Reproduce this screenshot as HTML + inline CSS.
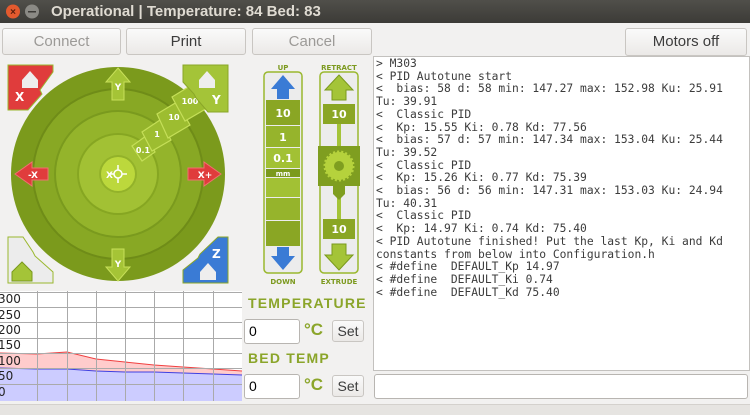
<!DOCTYPE html>
<html><head><meta charset="utf-8"><style>
*{margin:0;padding:0;box-sizing:border-box}
body{width:750px;height:415px;background:#f2f1f0;position:relative;overflow:hidden;font-family:"Liberation Sans","DejaVu Sans",sans-serif}
.t{position:absolute;left:0;top:0;width:750px;height:23px;background:linear-gradient(#504f4a,#3c3b37);color:#dfdbd2;font-weight:bold;font-size:15px;line-height:23px}
.btn{position:absolute;height:27px;border:1px solid #c9c6c2;border-radius:3px;background:linear-gradient(#fafafa,#ebe9e7);font-size:15px;text-align:center;line-height:25px;color:#3c3c3c}
.dis{color:#9c9a97}
.con{position:absolute;left:373px;top:56px;width:377px;height:315px;background:#fff;border:1px solid #c3c1be;font-family:"DejaVu Sans Mono",monospace;font-size:11.3px;line-height:12.7px;color:#3c3c3c;padding:1px 0 0 2px;white-space:pre}
.inp{position:absolute;background:#fff;border:1px solid #b8b5b1;border-radius:3px}
.lbl{position:absolute;color:#8ba52a;font-weight:bold;font-size:14px;letter-spacing:1.2px}
</style></head><body>
<div class="t"><svg width="50" height="23" style="position:absolute;left:0;top:0"><circle cx="13" cy="11.5" r="7" fill="#e45a2e"/><text x="13" y="15" font-size="10" text-anchor="middle" fill="#5a1e0c" font-weight="bold">×</text><circle cx="32" cy="11.5" r="7" fill="#8b8a85"/><rect x="28" y="11" width="8" height="1.5" fill="#3c3b37"/></svg><span style="position:absolute;left:51px">Operational | Temperature: 84 Bed: 83</span></div>
<div class="btn dis" style="left:2px;top:28px;width:119px">Connect</div>
<div class="btn" style="left:126px;top:28px;width:120px">Print</div>
<div class="btn dis" style="left:252px;top:28px;width:120px">Cancel</div>
<div class="btn" style="left:625px;top:28px;width:122px;height:28px">Motors off</div>
<div class="con">&gt; M303
&lt; PID Autotune start
&lt;  bias: 58 d: 58 min: 147.27 max: 152.98 Ku: 25.91
Tu: 39.91
&lt;  Classic PID
&lt;  Kp: 15.55 Ki: 0.78 Kd: 77.56
&lt;  bias: 57 d: 57 min: 147.34 max: 153.04 Ku: 25.44
Tu: 39.52
&lt;  Classic PID
&lt;  Kp: 15.26 Ki: 0.77 Kd: 75.39
&lt;  bias: 56 d: 56 min: 147.31 max: 153.03 Ku: 24.94
Tu: 40.31
&lt;  Classic PID
&lt;  Kp: 14.97 Ki: 0.74 Kd: 75.40
&lt; PID Autotune finished! Put the last Kp, Ki and Kd
constants from below into Configuration.h
&lt; #define  DEFAULT_Kp 14.97
&lt; #define  DEFAULT_Ki 0.74
&lt; #define  DEFAULT_Kd 75.40</div>
<div class="inp" style="left:374px;top:374px;width:374px;height:25px"></div>
<div style="position:absolute;left:0;top:404px;width:750px;height:11px;background:#e6e4e1;border-top:1px solid #d4d1cd"></div>

<svg width="370" height="290" style="position:absolute;left:0;top:0" font-family="DejaVu Sans" font-weight="bold">
<circle cx="118" cy="174" r="107" fill="#7b9a1c"/>
<circle cx="118" cy="174" r="86" fill="#6f8c18"/><circle cx="118" cy="174" r="84" fill="#88a824"/>
<circle cx="118" cy="174" r="64" fill="#7a9a1e"/><circle cx="118" cy="174" r="62" fill="#94b42b"/>
<circle cx="118" cy="174" r="41" fill="#86a622"/><circle cx="118" cy="174" r="39" fill="#a2c134"/>
<circle cx="118" cy="174" r="19" fill="#93b22a"/><circle cx="118" cy="174" r="17" fill="#bcd83c"/>
<g fill="#9dbd30" stroke="#c5df58" stroke-width="1.2">
<polygon points="132,146 146,136 155,152 142,161"/>
<polygon points="142,132 160,120 171,140 152,151"/>
<polygon points="157,114 177,102 190,125 168,138"/>
<polygon points="172,97 195,83 209,107 185,121"/>
</g>
<g fill="#fff" font-size="8" text-anchor="middle"><text x="143" y="153">0.1</text><text x="157" y="137">1</text><text x="174" y="120">10</text><text x="190" y="104">100</text></g>
<g fill="#a5c436" stroke="#c8e05a" stroke-width="1">
<polygon points="118,68 130,82 124,82 124,100 112,100 112,82 106,82"/>
<polygon points="118,281 130,267 124,267 124,249 112,249 112,267 106,267"/>
</g>
<text x="118" y="90" fill="#fff" font-size="9" text-anchor="middle">Y</text>
<text x="118" y="267" fill="#fff" font-size="9" text-anchor="middle">Y</text>
<g fill="#e03c3c" stroke="#f07070" stroke-width="1">
<polygon points="15,174 32,162 32,168 48,168 48,180 32,180 32,186"/>
<polygon points="221,174 204,162 204,168 188,168 188,180 204,180 204,186"/>
</g>
<text x="28" y="178" fill="#fff" font-size="9">-X</text><text x="205" y="178" fill="#fff" font-size="9" text-anchor="middle">X+</text>
<text x="106" y="178" fill="#fff" font-size="9">X</text>
<circle cx="118" cy="174" r="4" fill="none" stroke="#fff" stroke-width="1.5"/>
<path d="M118 165v5M118 178v5M109 174h5M122 174h5" stroke="#fff" stroke-width="1.5"/>
<polygon points="8,65 53,65 53,72 40,90 42,94 28,110 8,110" fill="#e03c3c" stroke="#9ab82e"/>
<text x="15" y="101" fill="#fff" font-size="12">X</text><path d="M22 80l8-9 8 9v8h-16z" fill="#eee"/>
<polygon points="183,65 228,65 228,112 208,112 196,98 194,94 183,82" fill="#a4c438" stroke="#8aa628"/>
<text x="212" y="104" fill="#fff" font-size="12">Y</text><path d="M199 80l8-9 8 9v8h-16z" fill="#eee"/>
<polygon points="8,237 23,237 33,252 35,256 53,272 53,283 8,283" fill="#ececec" stroke="#9ab82e"/>
<path d="M12 272l10-10 10 10v9h-20z" fill="#a4c438" stroke="#7a9a1c"/>
<polygon points="228,237 228,283 183,283 183,270 198,258 200,254 218,237" fill="#3a7bd5" stroke="#8aa628"/>
<text x="212" y="258" fill="#fff" font-size="12">Z</text><path d="M200 272l8-9 8 9v8h-16z" fill="#eee"/>
<g font-size="7" fill="#7d9a20" text-anchor="middle"><text x="283" y="70">UP</text><text x="283" y="284">DOWN</text><text x="339" y="70">RETRACT</text><text x="339" y="284">EXTRUDE</text></g>
<rect x="264" y="72" width="38" height="201" rx="4" fill="#ececec" stroke="#9ab82e" stroke-width="1.5"/>
<polygon points="283,75 295,89 289,89 289,99 277,99 277,89 271,89" fill="#3a7bd5"/>
<polygon points="283,270 295,256 289,256 289,247 277,247 277,256 271,256" fill="#3a7bd5"/>
<rect x="266" y="100" width="34" height="25" fill="#8aa624"/><rect x="266" y="126" width="34" height="21" fill="#96b42c"/><rect x="266" y="148" width="34" height="20" fill="#a2c134"/><rect x="266" y="169" width="34" height="8" fill="#7b9a1c"/>
<rect x="266" y="178" width="34" height="19" fill="#a2c134"/><rect x="266" y="198" width="34" height="22" fill="#96b42c"/><rect x="266" y="221" width="34" height="25" fill="#8aa624"/>
<g fill="#fff" font-size="11" text-anchor="middle"><text x="283" y="117">10</text><text x="283" y="141">1</text><text x="283" y="162">0.1</text><text x="283" y="176" font-size="7">mm</text></g>
<rect x="320" y="72" width="38" height="201" rx="4" fill="#ececec" stroke="#9ab82e" stroke-width="1.5"/>
<polygon points="339,75 353,90 346,90 346,100 332,100 332,90 325,90" fill="#a4c438" stroke="#7a9a1c"/>
<polygon points="339,270 353,255 346,255 346,244 332,244 332,255 325,255" fill="#a4c438" stroke="#7a9a1c"/>
<rect x="337" y="124" width="4" height="95" fill="#a4c438"/>
<rect x="323" y="104" width="32" height="20" fill="#8aa624"/><rect x="323" y="219" width="32" height="20" fill="#8aa624"/>
<rect x="318" y="146" width="42" height="40" fill="#7f9e20"/><path d="M333 186h12v8l-6 6-6-6z" fill="#7f9e20"/>
<circle cx="339" cy="166" r="14" fill="#b5d23c" stroke="#b5d23c" stroke-width="3" stroke-dasharray="2 2"/><circle cx="339" cy="166" r="5" fill="#7f9e20"/>
<g fill="#fff" font-size="11" text-anchor="middle"><text x="339" y="118">10</text><text x="339" y="233">10</text></g>
</svg>

<svg width="242" height="110" style="position:absolute;left:0;top:291px" font-family="DejaVu Sans">
<rect width="242" height="110" fill="#fff"/>
<polygon points="0,62 37,63 67,61 96,68 125,71 154,74 183,76 213,78 242,80 242,110 0,110" fill="#ffcccc"/>
<polyline points="0,62 37,63 67,61 96,68 125,71 154,74 183,76 213,78 242,80" fill="none" stroke="#f04040"/>
<polygon points="0,77 37,78 67,78 96,80 125,81 154,81 183,82 213,83 242,84 242,110 0,110" fill="#ccccff"/>
<polyline points="0,77 37,78 67,78 96,80 125,81 154,81 183,82 213,83 242,84" fill="none" stroke="#4040e0"/>
<g stroke="#aaa" stroke-width="1"><path d="M0 1.5H242M0 16.5H242M0 31.5H242M0 47.5H242M0 62.5H242M0 77.5H242M0 93.5H242M37.5 0V110M67.5 0V110M96.5 0V110M125.5 0V110M154.5 0V110M183.5 0V110M213.5 0V110"/></g>
<g font-size="12" fill="#222"><text x="-2" y="12">300</text><text x="-2" y="28">250</text><text x="-2" y="43">200</text><text x="-2" y="58">150</text><text x="-2" y="74">100</text><text x="-2" y="89">50</text><text x="-2" y="105">0</text></g>
</svg>
<div class="lbl" style="left:248px;top:295px">TEMPERATURE</div>
<div class="inp" style="left:244px;top:319px;width:56px;height:25px;font-size:14px;line-height:23px;padding-left:4px">0</div>
<div class="lbl" style="left:304px;top:320px;font-size:17px;letter-spacing:0">°C</div>
<div class="btn" style="left:332px;top:320px;width:32px;height:22px;line-height:20px;font-size:14px">Set</div>
<div class="lbl" style="left:248px;top:350px">BED TEMP</div>
<div class="inp" style="left:244px;top:374px;width:56px;height:25px;font-size:14px;line-height:23px;padding-left:4px">0</div>
<div class="lbl" style="left:304px;top:375px;font-size:17px;letter-spacing:0">°C</div>
<div class="btn" style="left:332px;top:375px;width:32px;height:22px;line-height:20px;font-size:14px">Set</div>
</body></html>
